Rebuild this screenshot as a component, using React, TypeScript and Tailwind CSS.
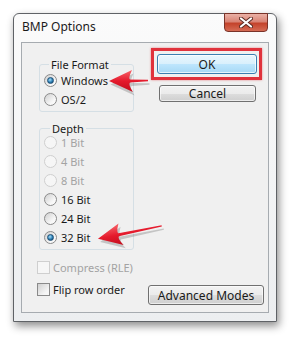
import React from "react";

function Radio({ checked, disabled, label }: { checked?: boolean; disabled?: boolean; label: string }) {
  return (
    <div className="flex items-center h-[19px] gap-[4px] pl-[4px]">
      <span
        className={
          disabled
            ? "w-[13px] h-[13px] rounded-full border border-[#cfcfcf] bg-[#f6f6f6] flex items-center justify-center shrink-0"
            : "w-[13px] h-[13px] rounded-full border border-[#8a8a8a] bg-[linear-gradient(135deg,#cfcfcf,#f8f8f8_70%)] flex items-center justify-center shrink-0"
        }
      >
        {checked && (
          <span className="w-[7px] h-[7px] rounded-full bg-[radial-gradient(circle_at_40%_35%,#a8e0fa,#2c7fb5_55%,#0f3a5c)] border border-[#1f4f75]" />
        )}
      </span>
      <span className={disabled ? "text-[#a3a3a3]" : "text-[#1a1a1a]"}>{label}</span>
    </div>
  );
}

function Check({ disabled, label }: { disabled?: boolean; label: string }) {
  return (
    <div className="flex items-center h-[19px] gap-[3px]">
      <span
        className={
          disabled
            ? "w-[13px] h-[13px] border border-[#cfcfcf] bg-[#f6f6f6] shrink-0"
            : "w-[13px] h-[13px] border border-[#8a8a8a] bg-[linear-gradient(135deg,#d0d0d0,#f6f6f6_75%)] shrink-0"
        }
      />
      <span className={disabled ? "text-[#a3a3a3]" : "text-[#1a1a1a]"}>{label}</span>
    </div>
  );
}

function Arrow({ className, len, id }: { className: string; len: number; id: string }) {
  const h = 26;
  const m = h / 2;
  return (
    <svg className={className} viewBox={`0 0 ${len} ${h}`} width={len} height={h} overflow="visible">
      <defs>
        <linearGradient id={id} x1="0" y1="0" x2="0" y2="1">
          <stop offset="0" stopColor="#f7646a" />
          <stop offset="0.5" stopColor="#e51a2c" />
          <stop offset="1" stopColor="#c10d1c" />
        </linearGradient>
      </defs>
      <path
        d={`M1 ${m + 1.5} L24 ${m - 9.5} Q20 ${m - 1} 22 ${m} L${len} ${m + 0.3} L${len} ${m + 1.7} L22 ${m + 3} Q20 ${m + 5} 25 ${m + 12.5} Z`}
        fill="rgba(0,0,0,0.18)"
        transform="translate(1.5,2)"
      />
      <path
        d={`M1 ${m} L24 ${m - 11} Q20 ${m - 2.5} 22 ${m - 1.5} L${len} ${m - 1.2} L${len} ${m + 0.2} L22 ${m + 1.5} Q20 ${m + 3.5} 25 ${m + 11} Z`}
        fill={`url(#${id})`}
      />
    </svg>
  );
}

export default function App() {
  return (
    <div className="w-[292px] h-[337px] bg-white relative overflow-hidden font-['Noto_Sans',sans-serif] text-[11px] leading-[13px]">
      <div className="pt-[13px] pl-[13px]">
        <div className="w-[264px] h-[309px] rounded-t-[6px] border border-[#5f6266] bg-[linear-gradient(180deg,#fbfbfb,#eceef0)] shadow-[2px_4px_8px_rgba(0,0,0,0.45)] flex flex-col">
          <div className="h-[28px] shrink-0 flex items-start relative">
            <span className="pl-[8px] pt-[6px] text-[12px] leading-[14px] text-[#1a1a1a]">BMP Options</span>
            <div className="absolute right-[8px] top-[-1px] w-[44px] h-[19px] rounded-b-[4px] border border-[#7a3329] bg-[linear-gradient(180deg,#eab1a6,#d98475_45%,#c4432b_55%,#d56b54)] flex items-center justify-center">
              <svg width="14" height="11" viewBox="0 0 14 11">
                <path d="M2 1.5 L12 9.5 M12 1.5 L2 9.5" stroke="#5a2a22" strokeWidth="4" strokeLinecap="round" />
                <path d="M2 1.5 L12 9.5 M12 1.5 L2 9.5" stroke="#ffffff" strokeWidth="2.2" strokeLinecap="round" />
              </svg>
            </div>
          </div>
          <div className="mx-[7px] mb-[8px] flex-1 border border-[#a6abb0] bg-[#f0f0f0] flex">
            <div className="pl-[15px] pt-[15px] flex flex-col">
              <fieldset className="ml-[2px] w-[95px] border border-[#d5dfe5] rounded-[3px] px-[0px] pb-[2px]">
                <legend className="ml-[9px] px-[2px] leading-[13px] text-[#1a1a1a]">File Format</legend>
                <Radio checked label="Windows" />
                <Radio label="OS/2" />
              </fieldset>
              <fieldset className="ml-[2px] mt-[10px] w-[95px] border border-[#d5dfe5] rounded-[3px] pb-[2px]">
                <legend className="ml-[10px] px-[2px] leading-[13px] text-[#1a1a1a]">Depth</legend>
                <div className="-mt-[2px]">
                  <Radio disabled label="1 Bit" />
                  <Radio disabled label="4 Bit" />
                  <Radio disabled label="8 Bit" />
                  <Radio label="16 Bit" />
                  <Radio label="24 Bit" />
                  <Radio checked label="32 Bit" />
                </div>
              </fieldset>
              <div className="mt-[8px]">
                <Check disabled label="Compress (RLE)" />
              </div>
              <div className="mt-[3px]">
                <Check label="Flip row order" />
              </div>
            </div>
            <div className="ml-[14px] flex flex-col w-[116px] pt-[5px] pb-[7px]">
              <div className="ml-[3px] w-[111px] h-[32px] border-[3px] border-[#e0323c] p-[3px] pr-[2px] shadow-[0_0_2px_rgba(224,50,60,0.6)]">
                <div className="w-full h-full rounded-[3px] border border-[#3c7fb1] bg-[linear-gradient(180deg,#eaf6fd,#d9f0fc_50%,#bee6fd_51%,#a7d9f5)] flex items-center justify-center text-[#1a1a1a] text-[12px] shadow-[inset_0_0_0_1px_rgba(255,255,255,0.7)]">
                  OK
                </div>
              </div>
              <div className="ml-[11px] mt-[5px] w-[97px] h-[17px] rounded-[3px] border border-[#707070] bg-[linear-gradient(180deg,#f2f2f2,#ebebeb_50%,#dddddd_51%,#cfcfcf)] flex items-center justify-center text-[#1a1a1a] text-[12px] shadow-[inset_0_0_0_1px_rgba(255,255,255,0.6)]">
                Cancel
              </div>
              <div className="mt-auto w-[116px] h-[20px] rounded-[3px] border border-[#707070] bg-[linear-gradient(180deg,#f2f2f2,#ebebeb_50%,#dddddd_51%,#cfcfcf)] flex items-center justify-center text-[#1a1a1a] text-[12px] shadow-[inset_0_0_0_1px_rgba(255,255,255,0.6)]">
                Advanced Modes
              </div>
            </div>
          </div>
        </div>
      </div>
      <Arrow id="a1" len={40} className="absolute left-[108px] top-[68px]" />
      <Arrow id="a2" len={66} className="absolute left-[97px] top-[226px] rotate-[-11deg] origin-left" />
    </div>
  );
}
